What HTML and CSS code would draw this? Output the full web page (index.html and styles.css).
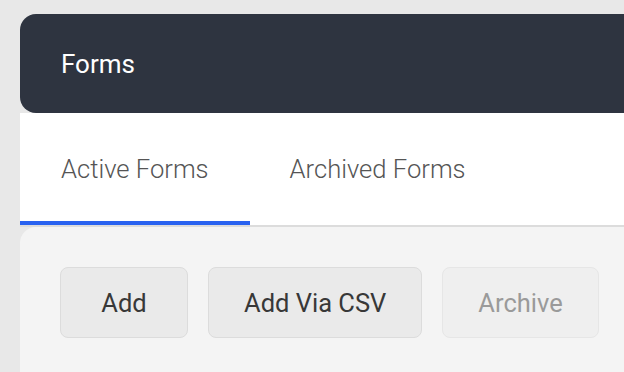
FILE: index.html
```html
<!DOCTYPE html>
<html lang="en">
<head>
    <meta charset="UTF-8">
    <title>Forms</title>
    <link rel="stylesheet" href="styles.css">
</head>
<body>
    <div class="page">
        <div class="header">Forms</div>

        <div class="tabs">
            <div class="tab active">Active Forms</div>
            <div class="tab">Archived Forms</div>
        </div>

        <div class="panel">
            <div class="actions">
                <button class="btn">Add</button>
                <button class="btn">Add Via CSV</button>
                <button class="btn" disabled>Archive</button>
            </div>
        </div>
    </div>
</body>
</html>
```

FILE: styles.css
```css
html, body {
    padding: 0;
    margin: 0;
}

body {
    background: #e8e8e8;
    font-family: Roboto, "Liberation Sans", sans-serif;
    overflow: hidden;
    height: 372px;
}

.page {
    margin: 14px -40px 0 20px;
    height: 358px;
    overflow: hidden;
}

.header {
    height: 99px;
    padding-left: 41px;
    display: flex;
    align-items: center;
    background: #2e3440;
    border-radius: 16px;
    color: white;
    font-size: 26px;
    font-weight: 400;
}

.tabs {
    display: flex;
    gap: 40px;
    background: white;
    border-bottom: 2px solid #dcdcdc;
}

.tab {
    height: 104px;
    padding: 4px 41px 0;
    display: flex;
    align-items: center;
    font-size: 25.6px;
    font-weight: 300;
    color: #555;
    border-bottom: 4px solid transparent;
}

.tab + .tab {
    padding-left: 0;
}

.tab.active {
    border-bottom-color: #2962f0;
}

.panel {
    background: #f4f4f4;
    border-radius: 16px 16px 0 0;
    padding: 40px;
    height: 200px;
}

.actions {
    display: flex;
    gap: 20px;
}

.btn {
    height: 71px;
    min-width: 128px;
    padding: 0 35px;
    font-family: inherit;
    font-size: 25.5px;
    font-weight: 400;
    color: #383838;
    background: #eaeaea;
    border: 1px solid #dcdcdc;
    border-radius: 8px;
}

.btn:disabled {
    color: #9a9a9a;
    background: #efefef;
    border-color: #e6e6e6;
}
```
